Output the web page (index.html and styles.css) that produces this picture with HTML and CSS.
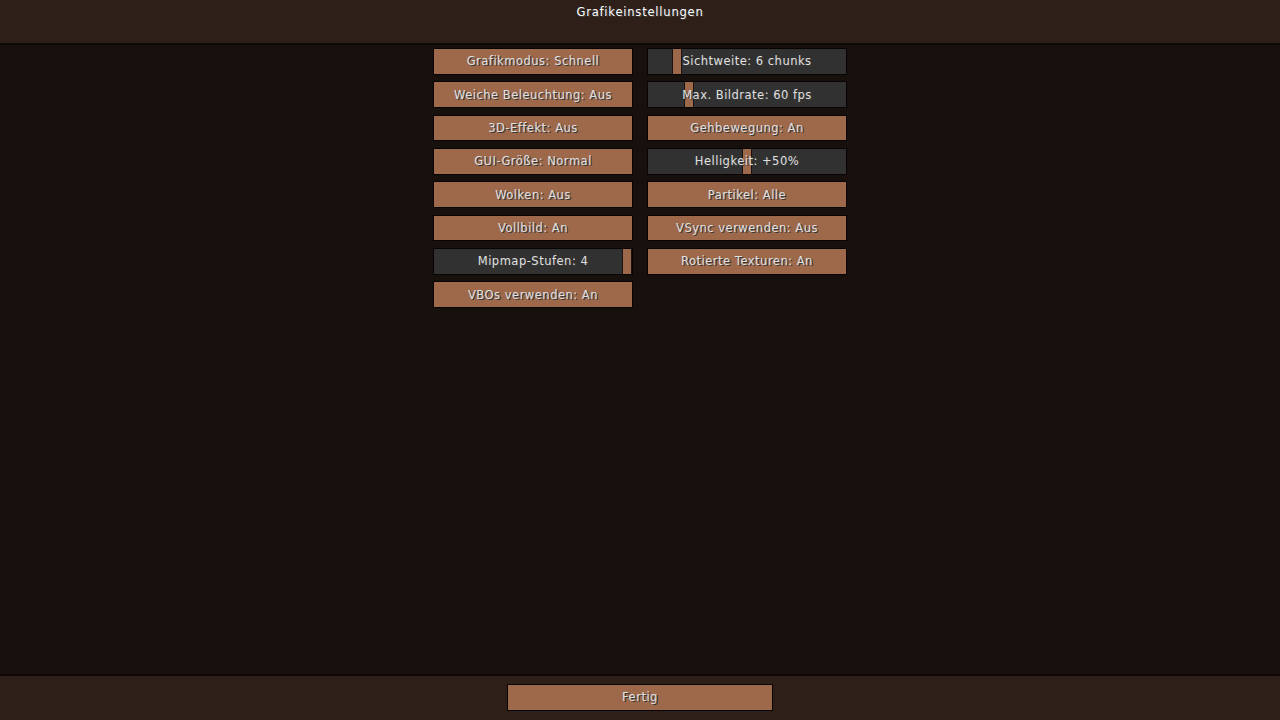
FILE: index.html
```html
<!DOCTYPE html>
<html lang="de">
<head>
<meta charset="utf-8">
<title>Grafikeinstellungen</title>
<link rel="stylesheet" href="styles.css">
</head>
<body>
<div class="screen">
  <header class="topbar">
    <h1 class="title">Grafikeinstellungen</h1>
  </header>
  <main class="content">
    <div class="grid">
      <div class="btn">Grafikmodus: Schnell</div>
      <div class="slider"><span class="handle" style="left:24px"></span><span class="label">Sichtweite: 6 chunks</span></div>
      <div class="btn">Weiche Beleuchtung: Aus</div>
      <div class="slider"><span class="handle" style="left:36px"></span><span class="label">Max. Bildrate: 60 fps</span></div>
      <div class="btn">3D-Effekt: Aus</div>
      <div class="btn">Gehbewegung: An</div>
      <div class="btn">GUI-Größe: Normal</div>
      <div class="slider"><span class="handle" style="left:94px"></span><span class="label">Helligkeit: +50%</span></div>
      <div class="btn">Wolken: Aus</div>
      <div class="btn">Partikel: Alle</div>
      <div class="btn">Vollbild: An</div>
      <div class="btn">VSync verwenden: Aus</div>
      <div class="slider"><span class="handle" style="left:188px"></span><span class="label">Mipmap-Stufen: 4</span></div>
      <div class="btn">Rotierte Texturen: An</div>
      <div class="btn">VBOs verwenden: An</div>
    </div>
  </main>
  <footer class="bottombar">
    <div class="btn wide">Fertig</div>
  </footer>
</div>
</body>
</html>
```

FILE: styles.css
```css
* { box-sizing: border-box; }
html, body { margin: 0; padding: 0; }
body {
  background: #17100d;
  font-family: "DejaVu Sans", "Liberation Sans", sans-serif;
  color: #e0e0e0;
}
.screen {
  width: 1280px;
  height: 720px;
  display: flex;
  flex-direction: column;
}
.topbar {
  height: 45px;
  background: #2e2018;
  border-bottom: 2px solid #0e0907;
  display: flex;
  justify-content: center;
}
.title {
  margin: 4px 0 0;
  font-size: 11.5px;
  font-weight: normal;
  letter-spacing: 0.8px;
  color: #ffffff;
  text-shadow: 1.3px 1.3px 0 #3f3f3f;
  line-height: 16px;
}
.content {
  flex: 1;
  padding-top: 3px;
}
.grid {
  width: 414px;
  margin: 0 auto;
  display: grid;
  grid-template-columns: 200px 200px;
  column-gap: 14px;
  row-gap: 6.67px;
  grid-auto-rows: 26.67px;
}
.btn, .slider {
  position: relative;
  border: 1px solid #070504;
  display: flex;
  align-items: center;
  justify-content: center;
  font-size: 11.5px;
  letter-spacing: 0.5px;
  color: #e0e0e0;
  text-shadow: 1.3px 1.3px 0 #383838;
  white-space: nowrap;
}
.btn {
  background: #9e694b;
}
.slider {
  background: #313131;
}
.handle {
  position: absolute;
  top: 0;
  bottom: 0;
  width: 10px;
  background: #9e694b;
  border-left: 1px solid #1a1210;
  border-right: 1px solid #1a1210;
}
.label {
  position: relative;
}
.bottombar {
  height: 46px;
  background: #2e2018;
  border-top: 2px solid #0e0907;
  display: flex;
  justify-content: center;
  padding-top: 8px;
}
.btn.wide {
  width: 266px;
  height: 26.67px;
}
```
